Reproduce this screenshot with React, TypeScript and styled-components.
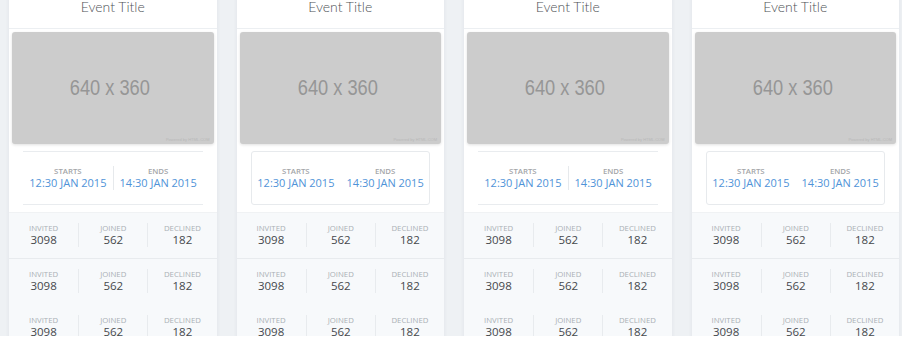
import React from "react";
import styled, { createGlobalStyle } from "styled-components";

const GlobalStyle = createGlobalStyle`
  html, body {
    margin: 0;
    padding: 0;
    background: #ffffff;
    font-family: "Open Sans", "Liberation Sans", sans-serif;
  }
  * { box-sizing: border-box; }
`;

const Viewport = styled.div`
  height: 336px;
  overflow: hidden;
  background: #eef1f4;
  padding: 0 3px 0 9px;
`;

const CardGrid = styled.div`
  display: grid;
  grid-template-columns: repeat(4, 1fr);
  column-gap: 20px;
  margin-top: -11px;
  align-items: start;
`;

const Card = styled.article`
  background: #ffffff;
  box-shadow: 0 0 4px rgba(40, 60, 80, 0.07);
`;

const Header = styled.header`
  padding: 8px 0 11px;
  border-bottom: 1px solid #eceff2;
  text-align: center;
  font-family: Lato, "Open Sans", sans-serif;
  font-weight: 300;
  font-size: 14px;
  line-height: 20px;
  color: #4f5357;
`;

const ImageWrap = styled.div`
  padding: 3px 3px 0;
`;

const Placeholder = styled.div`
  position: relative;
  height: 112px;
  background: #cccccc;
  border-radius: 3px;
  box-shadow: 0 1px 3px rgba(0, 0, 0, 0.12);
  display: flex;
  align-items: center;
  justify-content: center;
`;

const PlaceholderText = styled.span`
  font-family: "Liberation Sans", Arial, sans-serif;
  font-size: 22px;
  line-height: 1;
  color: #969696;
  transform: scaleX(0.83) translateX(-3px);
`;

const Credit = styled.span`
  position: absolute;
  right: 4px;
  bottom: 2px;
  font-family: "Liberation Sans", Arial, sans-serif;
  font-size: 4px;
  line-height: 5px;
  color: #b8b8b8;
`;

const DateSection = styled.div`
  padding: 7px 14px;
`;

const DateBox = styled.div<{ $boxed: boolean }>`
  display: grid;
  grid-template-columns: 1fr 1fr;
  padding: 14px 0;
  ${(p) =>
    p.$boxed
      ? `border: 1px solid #e7eaed; border-radius: 3px;`
      : `border-top: 1px solid #e9ecef; border-bottom: 1px solid #e9ecef;`}
`;

const DateCol = styled.div<{ $divider: boolean }>`
  text-align: center;
  border-left: 1px solid ${(p) => (p.$divider ? "#e6e9ec" : "transparent")};
  &:first-child {
    border-left: none;
  }
`;

const DateLabel = styled.div`
  font-size: 7.8px;
  font-weight: 600;
  line-height: 10px;
  color: #a4a6a9;
  text-transform: uppercase;
`;

const DateValue = styled.div`
  font-size: 11px;
  line-height: 14px;
  color: #4f93d8;
  white-space: nowrap;
`;

const Stats = styled.div`
  background: #f7f9fb;
  border-top: 1px solid #f0f2f4;
`;

const StatRow = styled.div<{ $divided: boolean }>`
  display: grid;
  grid-template-columns: repeat(3, 1fr);
  padding: 10px 0 11px;
  border-bottom: 1px solid ${(p) => (p.$divided ? "#e8ebee" : "transparent")};
`;

const StatCell = styled.div`
  text-align: center;
  border-left: 1px solid #e8ebee;
  &:first-child {
    border-left: none;
  }
`;

const StatLabel = styled.div`
  font-size: 7.8px;
  line-height: 10px;
  color: #aab0b5;
  text-transform: uppercase;
`;

const StatValue = styled.div`
  font-size: 11.5px;
  line-height: 14px;
  color: #45484c;
`;

type CardSpec = { boxed: boolean };

const cards: CardSpec[] = [
  { boxed: false },
  { boxed: true },
  { boxed: false },
  { boxed: true },
];

const stats = [
  { label: "Invited", value: "3098" },
  { label: "Joined", value: "562" },
  { label: "Declined", value: "182" },
];

function EventCard({ boxed }: CardSpec) {
  return (
    <Card>
      <Header>Event Title</Header>
      <ImageWrap>
        <Placeholder>
          <PlaceholderText>640 x 360</PlaceholderText>
          <Credit>Powered by HTML.COM</Credit>
        </Placeholder>
      </ImageWrap>
      <DateSection>
        <DateBox $boxed={boxed}>
          <DateCol $divider={!boxed}>
            <DateLabel>Starts</DateLabel>
            <DateValue>12:30 JAN 2015</DateValue>
          </DateCol>
          <DateCol $divider={!boxed}>
            <DateLabel>Ends</DateLabel>
            <DateValue>14:30 JAN 2015</DateValue>
          </DateCol>
        </DateBox>
      </DateSection>
      <Stats>
        {[0, 1, 2].map((r) => (
          <StatRow key={r} $divided={r === 0}>
            {stats.map((s) => (
              <StatCell key={s.label}>
                <StatLabel>{s.label}</StatLabel>
                <StatValue>{s.value}</StatValue>
              </StatCell>
            ))}
          </StatRow>
        ))}
      </Stats>
    </Card>
  );
}

export default function App() {
  return (
    <>
      <GlobalStyle />
      <Viewport>
        <CardGrid>
          {cards.map((c, i) => (
            <EventCard key={i} boxed={c.boxed} />
          ))}
        </CardGrid>
      </Viewport>
    </>
  );
}
